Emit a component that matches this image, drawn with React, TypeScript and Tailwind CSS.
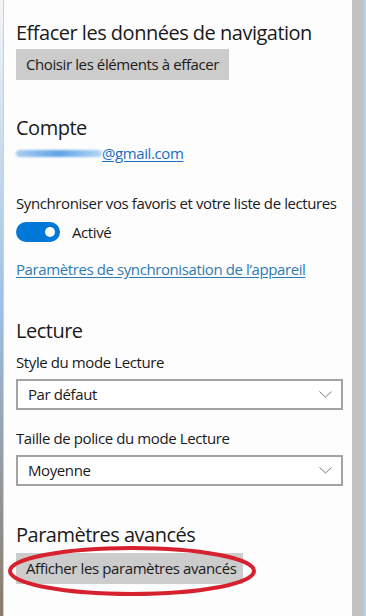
import React from "react";

const font = { fontFamily: '"Open Sans", "Noto Sans", sans-serif' };

function Chevron() {
  return (
    <svg width="13" height="7" viewBox="0 0 13 7" fill="none">
      <path d="M0.5 0.5 L6.5 6 L12.5 0.5" stroke="#7a7a7a" strokeWidth="1" />
    </svg>
  );
}

function Select({ value }: { value: string }) {
  return (
    <div className="flex h-[31px] w-[327px] items-center justify-between border-2 border-[#a3a3a3] bg-white pl-[10px] pr-[9px]">
      <span className="text-[15px] text-[#1a1a1a]">{value}</span>
      <Chevron />
    </div>
  );
}

export default function App() {
  return (
    <div
      className="flex h-[616px] w-[366px] overflow-hidden bg-white"
      style={font}
    >
      {/* background behind the flyout */}
      <div className="w-[3px] bg-gradient-to-b from-[#f4f6f8] via-[#9cc0e4] to-[#8a7a68]" />
      <div className="w-px bg-[#cfcfcf]" />

      <div className="relative flex w-[348px] flex-col bg-[#fdfdfd] pl-[12px] pt-[19px] tracking-[-0.4px] text-[#1a1a1a]">
        <h2 className="text-[20px] leading-[28px] tracking-[-0.5px]">
          Effacer les données de navigation
        </h2>
        <button className="mt-[2px] h-[31px] w-[213px] bg-[#cccccc] text-left pl-[10px] text-[15px]">
          Choisir les éléments à effacer
        </button>

        <h2 className="mt-[34px] text-[20px] leading-[28px] tracking-[-0.5px]">
          Compte
        </h2>
        <div className="mt-px flex h-[20px] items-center text-[15px]">
          <span className="h-[7px] w-[86px] rounded-full bg-gradient-to-r from-[#a9cdf0] via-[#5fa3e6] to-[#b6d6f4] blur-[1px]" />
          <span className="text-[#1b6ec2] underline underline-offset-2">
            @gmail.com
          </span>
        </div>

        <p className="mt-[30px] text-[15px] leading-[20px]">
          Synchroniser vos favoris et votre liste de lectures
        </p>
        <div className="mt-[9px] flex items-center">
          <div className="flex h-[20px] w-[44px] items-center justify-end rounded-full bg-[#0078d7] pr-[5px]">
            <div className="h-[10px] w-[10px] rounded-full bg-white" />
          </div>
          <span className="ml-[12px] text-[15px] leading-[20px]">Activé</span>
        </div>
        <a className="mt-[17px] text-[15px] leading-[20px] text-[#2f7bb1] underline underline-offset-2">
          Paramètres de synchronisation de l’appareil
        </a>

        <h2 className="mt-[38px] text-[20px] leading-[28px] tracking-[-0.5px]">
          Lecture
        </h2>
        <p className="mt-[7px] text-[15px] leading-[20px]">
          Style du mode Lecture
        </p>
        <div className="mt-[7px]">
          <Select value="Par défaut" />
        </div>
        <p className="mt-[18px] text-[15px] leading-[20px]">
          Taille de police du mode Lecture
        </p>
        <div className="mt-[7px]">
          <Select value="Moyenne" />
        </div>

        <h2 className="mt-[35px] text-[20px] leading-[28px] tracking-[-0.5px]">
          Paramètres avancés
        </h2>
        <button className="mt-[4px] h-[31px] w-[227px] bg-[#cccccc] text-left pl-[10px] text-[15px]">
          Afficher les paramètres avancés
        </button>

        {/* red annotation ellipse */}
        <svg
          className="pointer-events-none absolute left-[3px] top-[545px]"
          width="250"
          height="52"
          viewBox="0 0 250 52"
        >
          <ellipse
            cx="125"
            cy="26"
            rx="122"
            ry="23"
            fill="none"
            stroke="#d6222e"
            strokeWidth="4"
          />
        </svg>
      </div>

      <div className="w-[12px] bg-[#c2c2c2]" />
      <div className="w-[2px] bg-[#b7d2ea]" />
    </div>
  );
}
